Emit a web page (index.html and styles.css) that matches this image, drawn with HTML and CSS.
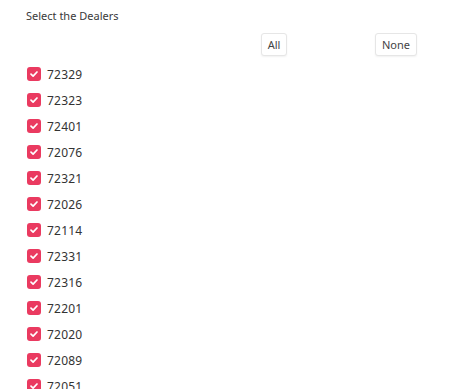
FILE: index.html
```html
<!DOCTYPE html>
<html>
<head>
    <title>Select the Dealers</title>
    <link rel="stylesheet" href="styles.css">
</head>
<body>
<div class="panel">
    <p class="title">Select the Dealers</p>

    <!-- All / None buttons -->
    <div class="actions">
        <div class="action-cell"><button class="btn">All</button></div>
        <div class="action-cell"><button class="btn">None</button></div>
    </div>

    <ul class="dealers" id="dealers"></ul>
</div>

<script>
    var dealers = ["72329", "72323", "72401", "72076", "72321", "72026", "72114",
                   "72331", "72316", "72201", "72020", "72089", "72051"];

    var list = document.getElementById("dealers");
    for (var i = 0; i < dealers.length; i++) {
        var li = document.createElement("li");
        li.className = "dealer";
        li.innerHTML = '<span class="check"><svg width="10" height="10" viewBox="0 0 10 10">' +
            '<path d="M2 5.2 L4.1 7.2 L8 3" fill="none" stroke="#fff" stroke-width="1.7" stroke-linecap="round" stroke-linejoin="round"/></svg></span>' +
            '<span class="code">' + dealers[i] + '</span>';
        list.appendChild(li);
    }
</script>
</body>
</html>
```

FILE: styles.css
```css
html, body {
    margin: 0;
    padding: 0;
    background: #fff;
    overflow: hidden;
}

body {
    font-family: "Noto Sans", "Open Sans", sans-serif;
    color: #333;
}

.panel {
    padding: 8px 17px 0 26px;
}

.title {
    margin: 0;
    font-size: 11px;
    line-height: 15px;
    color: #3a3a3a;
}

/* two equal columns on the right, buttons centered */
.actions {
    display: flex;
    justify-content: flex-end;
    margin-top: 10px;
}

.action-cell {
    width: 122px;
    display: flex;
    justify-content: center;
}

.btn {
    font-family: inherit;
    font-size: 11px;
    color: #444;
    background: #fff;
    border: 1px solid #e6e6e6;
    border-radius: 3px;
    height: 23px;
    padding: 0 6px;
    box-shadow: 0 1px 2px rgba(0, 0, 0, 0.06);
}

.dealers {
    list-style: none;
    margin: 5px 0 0 1px;
    padding: 0;
}

.dealer {
    display: flex;
    align-items: center;
    height: 26px;
}

.check {
    width: 14px;
    height: 14px;
    border-radius: 3px;
    background: #ea3a60;
    display: flex;
    align-items: center;
    justify-content: center;
}

.code {
    margin-left: 6px;
    font-size: 12px;
    color: #333;
    letter-spacing: 0.2px;
}
```
